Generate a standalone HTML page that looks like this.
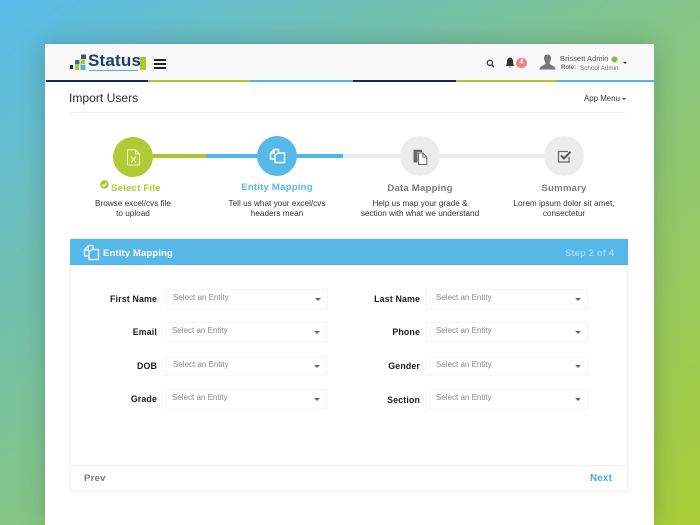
<!DOCTYPE html>
<html>
<head>
<meta charset="utf-8">
<style>
html,body{margin:0;padding:0;width:700px;height:525px;overflow:hidden}
body{position:relative;font-family:"Liberation Sans",sans-serif;background:linear-gradient(to bottom right,#58bbea 0%,#84c586 50%,#aace36 100%)}
.a{position:absolute;white-space:nowrap}
.c{text-align:center}
#card{position:absolute;left:45px;top:44px;width:609px;height:481px;background:#fff;box-shadow:0 0 22px rgba(40,60,70,.28)}
#hdr{position:absolute;left:45px;top:44px;width:609px;height:36px;background:#f8f8f8}
.bar{position:absolute;top:80px;height:2px}
.circle{position:absolute;width:40px;height:40px;border-radius:50%}
.line{position:absolute;height:4px;top:154px}
.t{font-size:9.600px;font-weight:700;letter-spacing:.2px}
.d{font-size:8.200px;color:#333;line-height:10px}
.lab{font-size:8.800px;font-weight:700;color:#1c1c1c;letter-spacing:.15px;text-align:right}
.sel{position:absolute;width:160px;height:18px;background:#fff;border:1px solid #f5f5f5;box-sizing:content-box}
.sel span{position:absolute;left:6px;top:3px;font-size:8px;color:#8a8a8a;white-space:nowrap}
.sel i{position:absolute;right:6px;top:8px;width:0;height:0;border-left:3.500px solid transparent;border-right:3.500px solid transparent;border-top:3px solid #666}
</style>
</head>
<body>
<div id="card"></div>
<div id="hdr"></div>
<div class="bar" style="left:46px;width:102px;background:#16295c"></div>
<div class="bar" style="left:148px;width:102px;background:#a9c82e"></div>
<div class="bar" style="left:250px;width:103px;background:#4cb4e6"></div>
<div class="bar" style="left:353px;width:103px;background:#16295c"></div>
<div class="bar" style="left:456px;width:101px;background:#a9c82e"></div>
<div class="bar" style="left:557px;width:97px;background:#4cb4e6"></div>

<!-- logo -->
<svg class="a" style="left:69px;top:54px" width="20" height="18" viewBox="0 0 20 18">
<rect x="1" y="11" width="3" height="4" fill="#16295c"/>
<rect x="6" y="11" width="4" height="5" fill="#a9c82e"/>
<rect x="11.500" y="11" width="5" height="5" fill="#4cb4e6"/>
<rect x="6" y="6" width="4.500" height="4.500" fill="#3c6d8f"/>
<rect x="11.500" y="5.500" width="4.500" height="5" fill="#a9c82e"/>
<rect x="12" y="0.500" width="5" height="4.500" fill="#3a5a80"/>
</svg>
<div class="a" style="left:88px;top:51px;font-size:17px;font-weight:700;color:#16406f;letter-spacing:.2px;line-height:20px">Status</div>
<div class="a" style="left:89px;top:70px;width:49px;height:1px;background:#4cb4e6"></div>
<div class="a" style="left:140px;top:57px;width:6px;height:13px;background:#a9c82e"></div>
<div class="a" style="left:154px;top:59px;width:12px;height:2px;background:#222"></div>
<div class="a" style="left:154px;top:63px;width:12px;height:2px;background:#222"></div>
<div class="a" style="left:154px;top:67px;width:12px;height:2px;background:#222"></div>

<!-- header right -->
<svg class="a" style="left:486px;top:59px" width="9" height="9" viewBox="0 0 9 9"><circle cx="3.800" cy="3.800" r="2.600" fill="none" stroke="#333" stroke-width="1.200"/><path d="M5.800 5.800L8 8" stroke="#333" stroke-width="1.400"/></svg>
<svg class="a" style="left:505px;top:57px" width="10" height="12" viewBox="0 0 10 12"><path d="M5 0.500C3 .8 2 2.400 2 4.500C2 7 1.500 8 .5 9H9.500C8.500 8 8 7 8 4.500C8 2.400 7 .8 5 .5Z" fill="#333"/><path d="M3.800 9.800A1.300 1.300 0 0 0 6.200 9.800Z" fill="#333"/></svg>
<div class="a c" style="left:516px;top:58px;width:11px;height:10px;border-radius:5px;background:#ef7f85;color:#fff;font-size:7px;line-height:10px;font-weight:700">4</div>
<svg class="a" style="left:539px;top:54px" width="17" height="16" viewBox="0 0 17 16"><path d="M8.500 .5C6 .5 5 2.300 5 4.500C5 6.500 6 8 6.500 8.800C6.800 10 6 10.500 4 11.500C2 12.300 .8 13 .5 15.500H16.500C16.200 13 15 12.300 13 11.500C11 10.500 10.200 10 10.500 8.800C11 8 12 6.500 12 4.500C12 2.300 11 .5 8.500 .5Z" fill="#777"/></svg>
<div class="a" style="left:560px;top:54px;font-size:7.600px;color:#555;line-height:10px">Brissett Admin</div>
<div class="a" style="left:611px;top:56px;width:5px;height:5px;border-radius:50%;background:#7fb93a;border:.5px solid #bcd9a0"></div>
<div class="a" style="left:561px;top:63.500px;font-size:6px;color:#666;line-height:9px;font-weight:700">Role:</div>
<div class="a" style="left:580px;top:63.500px;font-size:6.300px;color:#777;line-height:9px">School Admin</div>
<div class="a" style="left:623px;top:62px;width:0;height:0;border-left:2.500px solid transparent;border-right:2.500px solid transparent;border-top:2.500px solid #333"></div>

<!-- title row -->
<div class="a" style="left:69px;top:90px;font-size:12.100px;color:#2a2a2a;line-height:17px">Import Users</div>
<div class="a" style="left:584px;top:93px;font-size:7.900px;color:#333;line-height:11px">App Menu</div>
<div class="a" style="left:622px;top:98px;width:0;height:0;border-left:2.500px solid transparent;border-right:2.500px solid transparent;border-top:2.500px solid #444"></div>
<div class="a" style="left:70px;top:112px;width:555px;height:1px;background:#f3f3f3"></div>

<!-- stepper -->
<div class="line" style="left:150px;width:56px;background:#a9c82e"></div>
<div class="line" style="left:206px;width:56px;background:#4fb6e8"></div>
<div class="line" style="left:295px;width:48px;background:#4fb6e8"></div>
<div class="line" style="left:343px;width:60px;background:#ececec"></div>
<div class="line" style="left:438px;width:110px;background:#ececec"></div>
<div class="circle" style="left:113px;top:137px;background:#afcb36"></div>
<div class="circle" style="left:257px;top:136px;background:#56b9e9"></div>
<div class="circle" style="left:400px;top:136px;background:#ececec"></div>
<div class="circle" style="left:544px;top:136px;background:#ececec"></div>

<svg class="a" style="left:126px;top:149px" width="15" height="17" viewBox="0 0 15 17" fill="none" stroke="#eef5c8" stroke-width="1.100"><path d="M1.500 .8H9.500L13.500 4.800V16H1.500Z"/><path d="M9.500 .8V4.800H13.500"/><path d="M5 7.500L10 13.500M10 7.500L5 13.500" stroke-width="1.300"/></svg>
<svg class="a" style="left:269px;top:148px" width="17" height="16" viewBox="0 0 17 16" fill="none" stroke="#fff" stroke-width="1.400"><path d="M6 11H1.500V5.500L5 1.500H9.500V5"/><path d="M6 14.500V7L9.500 5H15.500V14.500Z"/><path d="M5 1.500V5H1.500"/></svg>
<svg class="a" style="left:413px;top:149px" width="15" height="16" viewBox="0 0 15 16"><path d="M.5 .8H9V3H4.500V13.500H.5Z" fill="#666"/><path d="M5.500 4H9.800L13.800 8V15.500H5.500Z" fill="#fff" stroke="#666" stroke-width="1"/><path d="M9.800 4V8H13.800" fill="none" stroke="#666"/></svg>
<svg class="a" style="left:557px;top:149px" width="15" height="15" viewBox="0 0 15 15" fill="none"><path d="M12 8V13H1.500V2.500H11" stroke="#6a6a6a" stroke-width="1.300"/><path d="M4 6.500L7 9.500L13.500 2.800" stroke="#555" stroke-width="2"/></svg>

<svg class="a" style="left:100px;top:180px" width="9" height="9" viewBox="0 0 9 9"><circle cx="4.500" cy="4.500" r="4.200" fill="#a9c82e"/><path d="M2.300 4.500L3.900 6L6.700 3.100" fill="none" stroke="#fff" stroke-width="1.200"/></svg>
<div class="a t" style="left:111px;top:182px;line-height:13px;color:#afcb36">Select File</div>
<div class="a t c" style="left:217px;top:181px;width:120px;line-height:13px;color:#56b9e9">Entity Mapping</div>
<div class="a t c" style="left:360px;top:182px;width:120px;line-height:13px;color:#7b7b7b">Data Mapping</div>
<div class="a t c" style="left:504px;top:182px;width:120px;line-height:13px;color:#7b7b7b">Summary</div>

<div class="a d c" style="left:73px;top:198.500px;width:120px">Browse excel/cvs file<br>to upload</div>
<div class="a d c" style="left:217px;top:198.500px;width:120px">Tell us what your excel/cvs<br>headers mean</div>
<div class="a d c" style="left:360px;top:198.500px;width:120px">Help us map your grade &amp;<br>section with what we understand</div>
<div class="a d c" style="left:504px;top:198.500px;width:120px">Lorem ipsum dolor sit amet,<br>consectetur</div>

<!-- panel -->
<div class="a" style="left:70px;top:238px;width:556px;height:252px;border:1px solid #f0f0f0;background:#fff"></div>
<div class="a" style="left:70px;top:239px;width:558px;height:26px;background:#55b8e8;border-bottom:1px solid #4fb2e4;box-sizing:border-box"></div>
<svg class="a" style="left:83px;top:244px" width="17" height="17" viewBox="0 0 17 17" fill="none" stroke="#fff" stroke-width="1.200"><path d="M6 12H1.500V6L5.500 1.500H10V5.500"/><path d="M6 15.500V7.500L9.500 5.500H15.500V15.500Z"/><path d="M5.500 1.500V6H1.500"/></svg>
<div class="a" style="left:103px;top:246px;font-size:9.400px;font-weight:700;color:#fff;line-height:13px;letter-spacing:.2px">Entity Mapping</div>
<div class="a" style="left:565px;top:247px;font-size:9.300px;font-weight:700;color:#9ad8f3;line-height:13px;letter-spacing:.2px">Step 2 of 4</div>

<div class="a lab" style="left:90px;top:293px;width:67px;line-height:12px">First Name</div>
<div class="a lab" style="left:90px;top:326px;width:67px;line-height:12px">Email</div>
<div class="a lab" style="left:90px;top:360px;width:67px;line-height:12px">DOB</div>
<div class="a lab" style="left:90px;top:393px;width:67px;line-height:12px">Grade</div>
<div class="a lab" style="left:353px;top:293px;width:67px;line-height:12px">Last Name</div>
<div class="a lab" style="left:353px;top:326px;width:67px;line-height:12px">Phone</div>
<div class="a lab" style="left:353px;top:360px;width:67px;line-height:12px">Gender</div>
<div class="a lab" style="left:353px;top:394px;width:67px;line-height:12px">Section</div>

<div class="sel" style="left:166px;top:289px"><span>Select an Entity</span><i></i></div>
<div class="sel" style="left:165px;top:322px"><span>Select an Entity</span><i></i></div>
<div class="sel" style="left:165px;top:356px"><span style="left:7px">Select an Entity</span><i></i></div>
<div class="sel" style="left:165px;top:389px"><span>Select an Entity</span><i></i></div>
<div class="sel" style="left:426px;top:289px"><span style="left:9px">Select an Entity</span><i></i></div>
<div class="sel" style="left:426px;top:322px"><span style="left:9px">Select an Entity</span><i></i></div>
<div class="sel" style="left:426px;top:356px"><span style="left:9px">Select an Entity</span><i></i></div>
<div class="sel" style="left:426px;top:389px"><span style="left:9px">Select an Entity</span><i></i></div>

<div class="a" style="left:71px;top:465px;width:556px;height:1px;background:#eeeeee"></div>
<div class="a" style="left:84px;top:472px;font-size:9.600px;font-weight:700;color:#777;line-height:13px;letter-spacing:.2px">Prev</div>
<div class="a" style="left:590px;top:472px;font-size:9.800px;font-weight:700;color:#3fabdf;line-height:13px;letter-spacing:.2px">Next</div>
</body>
</html>
